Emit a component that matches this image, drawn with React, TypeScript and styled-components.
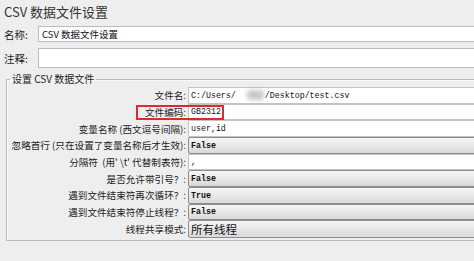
import React from "react";
import styled, { createGlobalStyle } from "styled-components";

const GlobalStyle = createGlobalStyle`
    html, body {
        margin: 0;
        padding: 0;
        background: #eeeeee;
        overflow: hidden;
    }
    body {
        font-family: "Noto Sans CJK SC", "Noto Sans", sans-serif;
        color: #1c1c1c;
    }
`;

type Row = {
    label: string;
    value: string;
    kind: "text" | "combo" | "cjk";
    marked?: boolean;
    blurAfter?: string;
};

const rows: Row[] = [
    { label: "文件名:", value: "C:/Users/", kind: "text", blurAfter: "/Desktop/test.csv" },
    { label: "文件编码:", value: "GB2312", kind: "text", marked: true },
    { label: "变量名称 (西文逗号间隔):", value: "user,id", kind: "text" },
    { label: "忽略首行 (只在设置了变量名称后才生效):", value: "False", kind: "combo" },
    { label: "分隔符  (用' \\t' 代替制表符):", value: ",", kind: "text" },
    { label: "是否允许带引号？:", value: "False", kind: "combo" },
    { label: "遇到文件结束符再次循环？:", value: "True", kind: "combo" },
    { label: "遇到文件结束符停止线程？:", value: "False", kind: "combo" },
    { label: "线程共享模式:", value: "所有线程", kind: "cjk" },
];

export default function App() {
    return (
        <Page>
            <GlobalStyle />
            <Title>CSV 数据文件设置</Title>
            <TopRow>
                <TopLabel>名称:</TopLabel>
                <TopInput $h={16}>CSV 数据文件设置</TopInput>
            </TopRow>
            <TopRow $gap={6}>
                <TopLabel>注释:</TopLabel>
                <TopInput $h={20} />
            </TopRow>
            <Group>
                <Legend>设置 CSV 数据文件</Legend>
                <Rows>
                    {rows.map((r) => (
                        <FormRow key={r.label}>
                            <Label>{r.label}</Label>
                            <Field $kind={r.kind}>
                                {r.value}
                                {r.blurAfter && (
                                    <>
                                        <Hidden>
                                            <Smudge />
                                        </Hidden>
                                        {r.blurAfter}
                                    </>
                                )}
                            </Field>
                            {r.marked && <Mark />}
                        </FormRow>
                    ))}
                </Rows>
            </Group>
        </Page>
    );
}

const Page = styled.div`
    width: 474px;
    height: 261px;
    overflow: hidden;
    background: #eeeeee;
`;

const Title = styled.div`
    height: 26px;
    line-height: 24px;
    padding-left: 4px;
    font-size: 13px;
    color: #333;
`;

const TopRow = styled.div<{ $gap?: number }>`
    display: flex;
    align-items: center;
    margin-top: ${(p) => p.$gap ?? 0}px;
    margin-right: -20px;
`;

const TopLabel = styled.span`
    width: 34px;
    padding-left: 4px;
    font-size: 10.5px;
    color: #222;
`;

const TopInput = styled.div<{ $h: number }>`
    flex: 1;
    height: ${(p) => p.$h}px;
    box-sizing: border-box;
    background: #fff;
    border: 1px solid #bcbcbc;
    padding-left: 3px;
    font-size: 9.5px;
    line-height: ${(p) => p.$h - 2}px;
    color: #111;
`;

const Group = styled.fieldset`
    margin: 4px -30px 0 6px;
    padding: 0 0 3px 0;
    border: 1px solid #bdbdbd;
    box-shadow: inset 1px 1px 0 #fafafa;
    min-width: 0;
`;

const Legend = styled.legend`
    margin-left: 3px;
    padding: 0 2px;
    font-size: 10px;
    line-height: 14px;
    color: #222;
`;

const Rows = styled.div`
    display: flex;
    flex-direction: column;
    padding-top: 1px;
`;

const FormRow = styled.div`
    position: relative;
    display: grid;
    grid-template-columns: 181px 1fr;
    align-items: center;
    height: 16.67px;
`;

const Label = styled.span`
    text-align: right;
    padding-right: 2px;
    font-size: 9.6px;
    white-space: pre;
    color: #1c1c1c;
`;

const Field = styled.div<{ $kind: "text" | "combo" | "cjk" }>`
    height: 100%;
    box-sizing: border-box;
    display: flex;
    align-items: center;
    padding-left: 2px;
    white-space: pre;
    color: #111;
    border: 1px solid ${(p) => (p.$kind === "text" ? "#c3c3c3" : "#8c8c8c")};
    border-radius: ${(p) => (p.$kind === "text" ? 0 : 2)}px;
    background: ${(p) =>
        p.$kind === "text" ? "#fff" : "linear-gradient(#f7f7f7, #e9e9e9 45%, #d9d9d9)"};
    font-family: ${(p) =>
        p.$kind === "cjk" ? `"Noto Sans CJK SC", sans-serif` : `"Liberation Mono", monospace`};
    font-size: ${(p) => (p.$kind === "cjk" ? 11.5 : 8.3)}px;
    font-weight: ${(p) => (p.$kind === "combo" ? 700 : 400)};
`;

const Hidden = styled.span`
    display: inline-block;
    width: 29px;
    height: 12px;
    position: relative;
`;

const Smudge = styled.span`
    position: absolute;
    left: 11px;
    top: 1px;
    width: 17px;
    height: 10px;
    background: #c9c9c9;
    border-radius: 3px;
    filter: blur(2px);
`;

const Mark = styled.div`
    position: absolute;
    left: 129px;
    top: 1px;
    width: 88px;
    height: 15px;
    box-sizing: border-box;
    border: 2px solid #dc2b2b;
    pointer-events: none;
`;
